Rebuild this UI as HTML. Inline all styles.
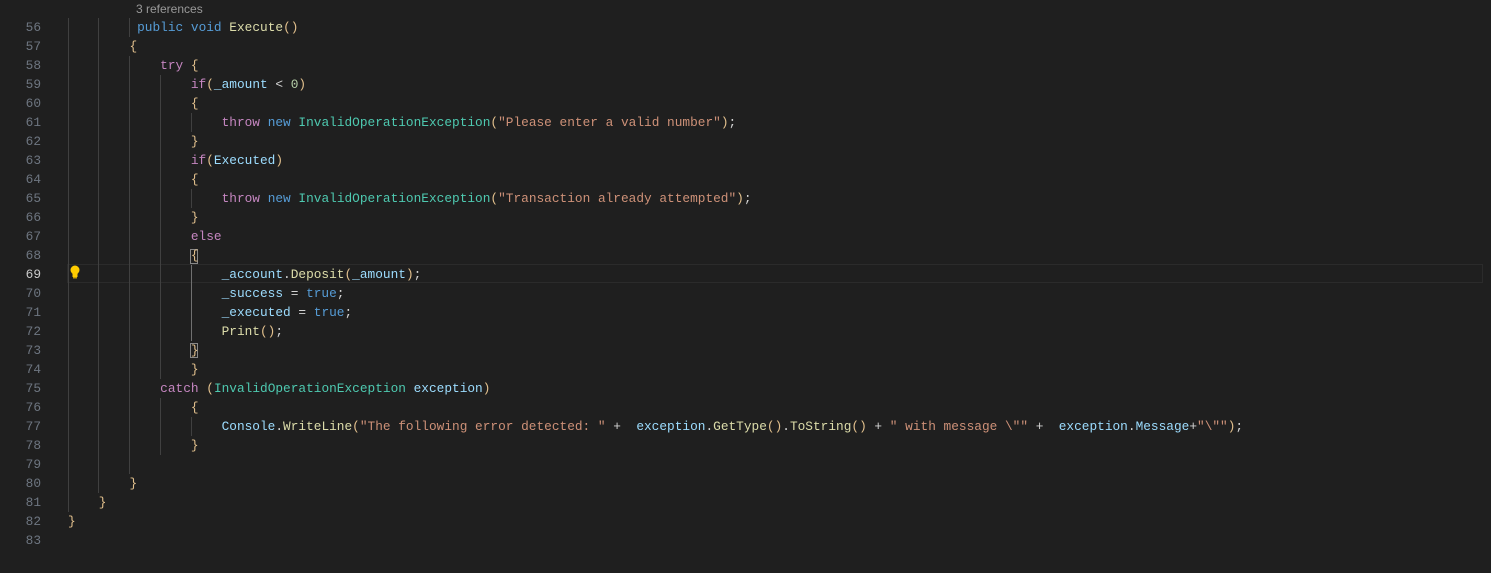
<!DOCTYPE html>
<html><head><meta charset="utf-8"><style>
body{margin:0;width:1491px;height:573px;background:#1f1f1f;overflow:hidden;position:relative;font-family:"Liberation Mono",monospace;font-size:12.8px;}
.ln{position:absolute;left:0;width:41px;text-align:right;color:#6e7681;height:19px;line-height:19px}
.c{position:absolute;left:68px;height:19px;line-height:19px;white-space:pre;color:#d4d4d4}
.g{position:absolute;width:1px;background:#404040}
.k{color:#569cd6}.p{color:#c586c0}.t{color:#4ec9b0}.m{color:#dcdcaa}.v{color:#9cdcfe}.s{color:#ce9178}.n{color:#b5cea8}
.y,.o,.b{color:#e2c08d}
</style></head><body>
<div style="position:absolute;left:67px;top:264px;width:1416px;height:19px;border:1px solid #2b2b2b;box-sizing:border-box"></div>
<div style="position:absolute;left:136px;top:2px;font-family:'Liberation Sans',sans-serif;font-size:12px;color:#999">3 references</div>
<div class="g" style="left:68px;top:18px;height:494px"></div>
<div class="g" style="left:98px;top:18px;height:475px"></div>
<div class="g" style="left:129px;top:18px;height:19px"></div>
<div class="g" style="left:129px;top:56px;height:418px"></div>
<div class="g" style="left:160px;top:75px;height:304px"></div>
<div class="g" style="left:160px;top:398px;height:57px"></div>
<div class="g" style="left:191px;top:113px;height:19px"></div>
<div class="g" style="left:191px;top:189px;height:19px"></div>
<div class="g" style="left:191px;top:265px;height:76px;background:#707070"></div>
<div class="g" style="left:191px;top:417px;height:19px"></div>
<div style="position:absolute;left:190px;top:249px;width:8px;height:15px;border:1px solid #888;box-sizing:border-box"></div>
<div style="position:absolute;left:190px;top:343px;width:8px;height:15px;border:1px solid #888;box-sizing:border-box"></div>
<svg style="position:absolute;left:69px;top:265px" width="12" height="14" viewBox="0 0 12 14"><circle cx="6" cy="5" r="4.5" fill="#ffcc00"/><rect x="3.5" y="8" width="5" height="4" fill="#ffcc00"/><rect x="4" y="12" width="4" height="1.5" fill="#c9a000"/></svg>

<div class="ln" style="top:18px">56</div><div class="c" style="top:18px">         <span class="k">public</span> <span class="k">void</span> <span class="m">Execute</span><span class="y">()</span></div>
<div class="ln" style="top:37px">57</div><div class="c" style="top:37px">        <span class="y">{</span></div>
<div class="ln" style="top:56px">58</div><div class="c" style="top:56px">            <span class="p">try</span> <span class="o">{</span></div>
<div class="ln" style="top:75px">59</div><div class="c" style="top:75px">                <span class="p">if</span><span class="b">(</span><span class="v">_amount</span> &lt; <span class="n">0</span><span class="b">)</span></div>
<div class="ln" style="top:94px">60</div><div class="c" style="top:94px">                <span class="b">{</span></div>
<div class="ln" style="top:113px">61</div><div class="c" style="top:113px">                    <span class="p">throw</span> <span class="k">new</span> <span class="t">InvalidOperationException</span><span class="y">(</span><span class="s">"Please enter a valid number"</span><span class="y">)</span>;</div>
<div class="ln" style="top:132px">62</div><div class="c" style="top:132px">                <span class="b">}</span></div>
<div class="ln" style="top:151px">63</div><div class="c" style="top:151px">                <span class="p">if</span><span class="b">(</span><span class="v">Executed</span><span class="b">)</span></div>
<div class="ln" style="top:170px">64</div><div class="c" style="top:170px">                <span class="b">{</span></div>
<div class="ln" style="top:189px">65</div><div class="c" style="top:189px">                    <span class="p">throw</span> <span class="k">new</span> <span class="t">InvalidOperationException</span><span class="y">(</span><span class="s">"Transaction already attempted"</span><span class="y">)</span>;</div>
<div class="ln" style="top:208px">66</div><div class="c" style="top:208px">                <span class="b">}</span></div>
<div class="ln" style="top:227px">67</div><div class="c" style="top:227px">                <span class="p">else</span></div>
<div class="ln" style="top:246px">68</div><div class="c" style="top:246px">                <span class="b">{</span></div>
<div class="ln" style="top:265px;color:#ccc">69</div><div class="c" style="top:265px">                    <span class="v">_account</span>.<span class="m">Deposit</span><span class="y">(</span><span class="v">_amount</span><span class="y">)</span>;</div>
<div class="ln" style="top:284px">70</div><div class="c" style="top:284px">                    <span class="v">_success</span> = <span class="k">true</span>;</div>
<div class="ln" style="top:303px">71</div><div class="c" style="top:303px">                    <span class="v">_executed</span> = <span class="k">true</span>;</div>
<div class="ln" style="top:322px">72</div><div class="c" style="top:322px">                    <span class="m">Print</span><span class="y">()</span>;</div>
<div class="ln" style="top:341px">73</div><div class="c" style="top:341px">                <span class="b">}</span></div>
<div class="ln" style="top:360px">74</div><div class="c" style="top:360px">                <span class="o">}</span></div>
<div class="ln" style="top:379px">75</div><div class="c" style="top:379px">            <span class="p">catch</span> <span class="o">(</span><span class="t">InvalidOperationException</span> <span class="v">exception</span><span class="o">)</span></div>
<div class="ln" style="top:398px">76</div><div class="c" style="top:398px">                <span class="y">{</span></div>
<div class="ln" style="top:417px">77</div><div class="c" style="top:417px">                    <span class="v">Console</span>.<span class="m">WriteLine</span><span class="o">(</span><span class="s">"The following error detected: "</span> +  <span class="v">exception</span>.<span class="m">GetType</span><span class="b">()</span>.<span class="m">ToString</span><span class="b">()</span> + <span class="s">" with message \""</span> +  <span class="v">exception</span>.<span class="v">Message</span>+<span class="s">"\""</span><span class="o">)</span>;</div>
<div class="ln" style="top:436px">78</div><div class="c" style="top:436px">                <span class="y">}</span></div>
<div class="ln" style="top:455px">79</div>
<div class="ln" style="top:474px">80</div><div class="c" style="top:474px">        <span class="y">}</span></div>
<div class="ln" style="top:493px">81</div><div class="c" style="top:493px">    <span class="y">}</span></div>
<div class="ln" style="top:512px">82</div><div class="c" style="top:512px"><span class="b">}</span></div>
<div class="ln" style="top:531px">83</div>
</body></html>
